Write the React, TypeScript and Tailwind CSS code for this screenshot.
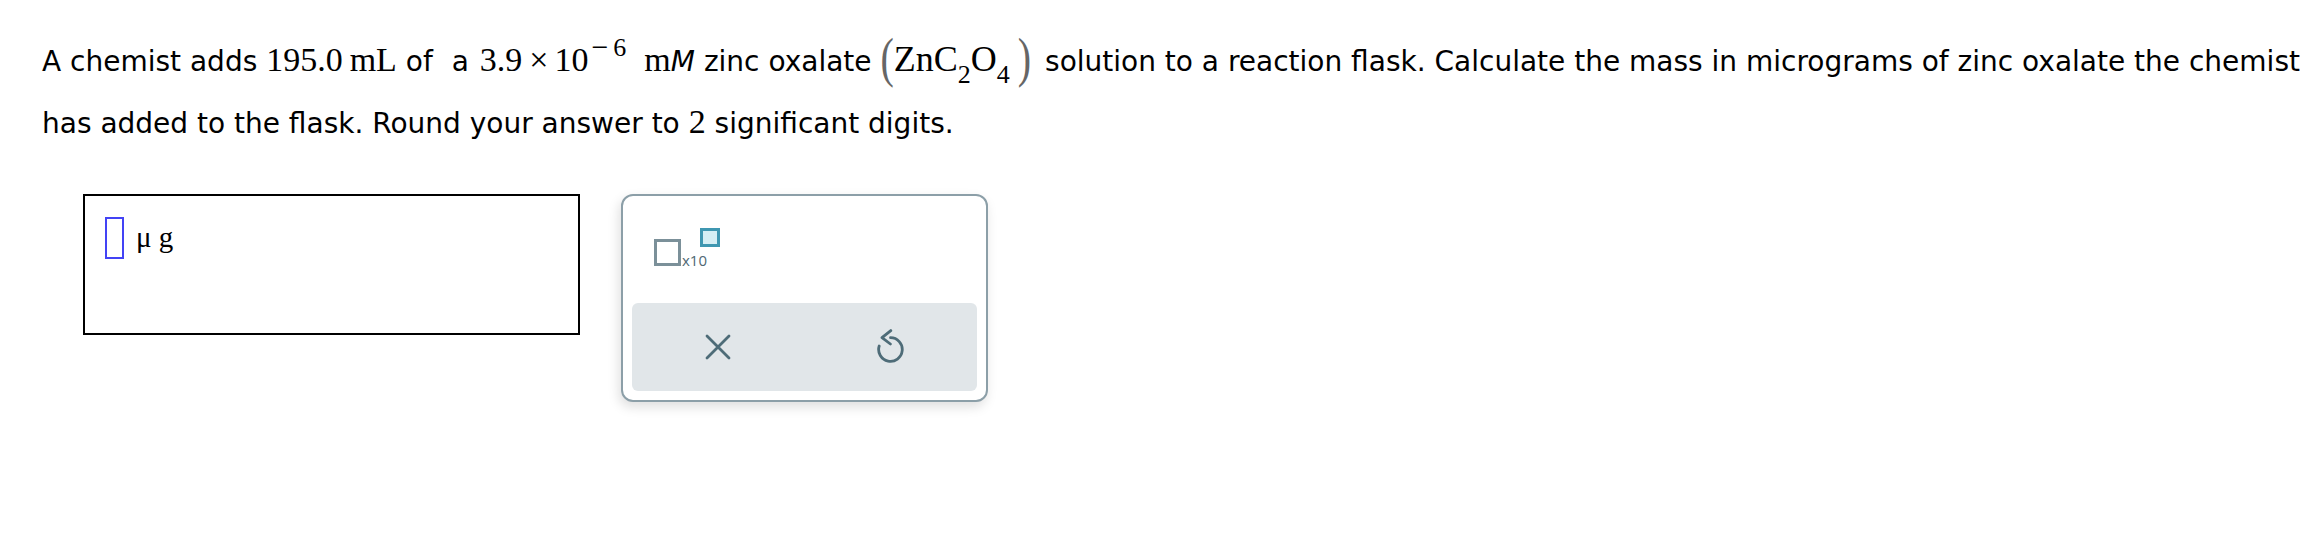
import React from "react";

const serif = "font-['Liberation_Serif','Times_New_Roman',serif]";

function XIcon() {
  return (
    <svg width="26" height="26" viewBox="0 0 26 26" fill="none">
      <path d="M2 2L24 24M24 2L2 24" stroke="#4e6c78" strokeWidth="2.8" strokeLinecap="round" />
    </svg>
  );
}

function UndoIcon() {
  return (
    <svg width="28" height="35" viewBox="0 0 28 35" fill="none">
      <path
        d="M13.5 8.7A11.8 11.8 0 1 1 2.2 17"
        stroke="#4e6c78"
        strokeWidth="2.8"
        strokeLinecap="round"
      />
      <path
        d="M13.8 1.6L5 8.7L13.4 15"
        stroke="#4e6c78"
        strokeWidth="2.8"
        strokeLinecap="round"
        strokeLinejoin="round"
      />
    </svg>
  );
}

export default function App() {
  return (
    <div className="min-h-screen w-full bg-white pl-[42px] pt-[31px] text-black">
      <p className="font-['DejaVu_Sans','Verdana',sans-serif] text-[28px] leading-[62px]">
        A chemist adds{" "}
        <span className={`${serif} text-[34px] leading-[0px]`}>
          195.0<span className="ml-[7px]">mL</span>
        </span>{" "}
        of <span className="ml-[10px]">a</span>{" "}
        <span className={`${serif} ml-[2px] text-[34px] leading-[0px]`}>
          3.9<span className="ml-[7px]">×</span>
          <span className="ml-[6px]">10</span>
        </span>
        <span className={`${serif} ml-[3px] text-[30px] leading-[0px] align-[14px]`}>−</span>
        <span className={`${serif} ml-[5px] text-[26px] leading-[0px] align-[15px]`}>6</span>
        <span className="ml-[18px]">
          <span className={`${serif} text-[34px] leading-[0px]`}>m</span>
          <span className="italic">M</span>
        </span>{" "}
        zinc oxalate{" "}
        <span className={`${serif} text-[36px] leading-[0px]`}>
          <span className="inline-block scale-y-[1.35] text-[40px] font-light leading-none text-[#666]">(</span>
          ZnC<span className="text-[26px] leading-[0px] align-[-12px]">2</span>O
          <span className="text-[26px] leading-[0px] align-[-12px]">4</span>
          <span className="ml-[8px] inline-block scale-y-[1.35] text-[40px] font-light leading-none text-[#666]">)</span>
        </span>{" "}
        <span className="ml-[5px]">solution</span> to a reaction flask. Calculate the mass in micrograms of
        zinc oxalate the chemist has added to the flask. Round your answer to{" "}
        <span className={`${serif} text-[34px] leading-[0px]`}>2</span> significant digits.
      </p>

      <div className="ml-[41px] mt-[39px] flex items-start">
        <div className="flex h-[141px] w-[497px] items-start border-2 border-black pl-[20px] pt-[21px]">
          <div className="h-[42px] w-[19px] border-2 border-[#4343f5]" />
          <span className={`${serif} ml-[12px] mt-[3px] text-[29px] leading-[34px]`}>μ g</span>
        </div>

        <div className="ml-[41px] flex h-[208px] w-[367px] flex-col rounded-[12px] border-2 border-[#8c9fa8] bg-white shadow-[-2px_5px_12px_rgba(0,0,0,0.13)]">
          <div className="flex h-[107px] items-start pl-[31px] pt-[32px]">
            <div className="mt-[11px] h-[27px] w-[27px] border-[3px] border-[#7b9099]" />
            <span className="ml-[1px] mt-[23px] font-['Open_Sans',sans-serif] text-[15px] leading-[18px] text-[#4f6873]">
              x10
            </span>
            <div className="ml-[-7px] h-[19px] w-[20px] border-[3px] border-[#3f97b1] bg-[#d5eef4]" />
          </div>
          <div className="mx-[9px] flex h-[88px] rounded-[6px] bg-[#e1e6e9]">
            <div className="flex flex-1 items-center justify-center">
              <XIcon />
            </div>
            <div className="flex flex-1 items-center justify-center pb-[2px]">
              <UndoIcon />
            </div>
          </div>
        </div>
      </div>
    </div>
  );
}
